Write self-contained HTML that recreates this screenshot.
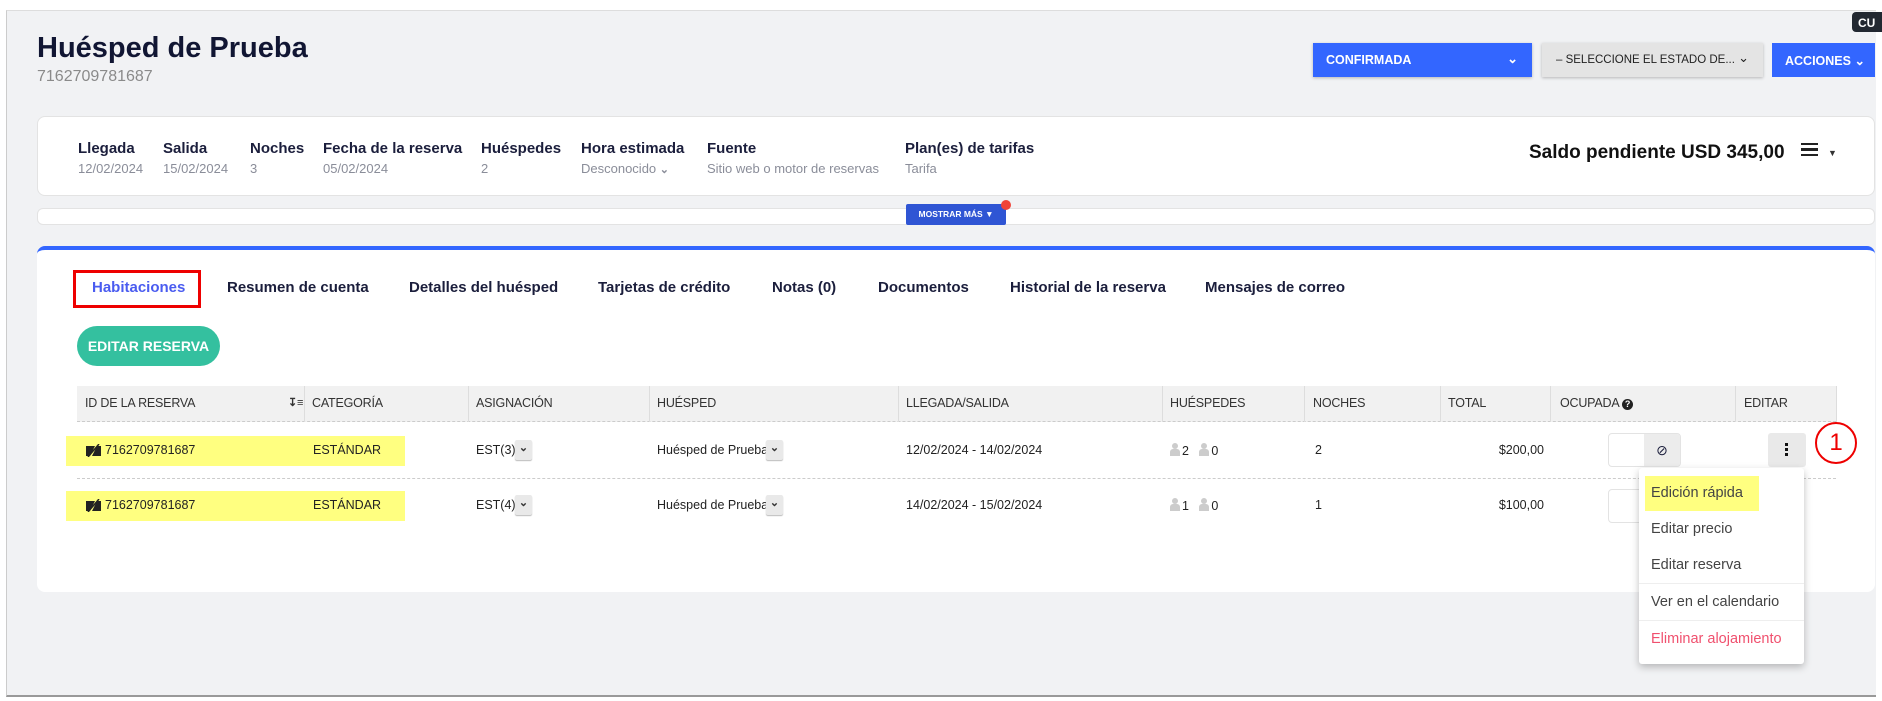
<!DOCTYPE html>
<html><head><meta charset="utf-8"><style>
*{box-sizing:border-box;margin:0;padding:0}
body{width:1882px;height:701px;overflow:hidden;background:#fff;font-family:"Liberation Sans",sans-serif;position:relative;color:#1b1e3c}
.a{position:absolute;white-space:nowrap}
.frame{left:6px;top:10px;width:1870px;height:687px;background:#f1f2f4;border-top:1px solid #ddd;border-left:1px solid #ccc;border-bottom:2px solid #999}
.card{background:#fff;border-radius:8px}
.lbl{font-size:15px;font-weight:bold;color:#1b1e3c;top:140px}
.val{font-size:13px;color:#8a8d99;top:161px}
.tab{font-size:15px;font-weight:bold;top:279px;color:#1b1e3c}
.th{font-size:12.5px;color:#333;top:396px;letter-spacing:-0.2px}
.sep{top:386px;width:1px;height:36px;background:#ddd}
.td{font-size:12.5px;color:#222}
.dd{width:17px;height:20px;background:#e9e9e9;border-radius:2px;box-shadow:0 1px 1px #bbb;font-size:11px;text-align:center;line-height:17px;color:#333;font-weight:bold}
.mi{font-size:14.5px;color:#444;left:1651px}
.pi{display:inline-block;vertical-align:-1px;margin-right:2px}
</style></head><body>
<div class="a frame"></div>
<div class="a" style="left:37px;top:32px;font-size:29px;font-weight:bold;color:#111633;letter-spacing:0px">Huésped de Prueba</div>
<div class="a" style="left:37px;top:68px;font-size:16px;color:#8a8a8a">7162709781687</div>

<div class="a" style="left:1313px;top:43px;width:219px;height:34px;background:#3366ff;box-shadow:0 1px 3px rgba(0,0,0,.25);color:#fff;font-size:12.5px;font-weight:bold;padding:10px 13px">CONFIRMADA<span style="position:absolute;right:14px;top:8px;font-size:13px">&#8964;</span></div>
<div class="a" style="left:1542px;top:43px;width:221px;height:34px;background:#e4e4e4;box-shadow:0 1px 3px rgba(0,0,0,.25);color:#222;font-size:11.5px;padding:11px 14px">– SELECCIONE EL ESTADO DE...<span style="position:absolute;right:14px;top:7px;font-size:13px">&#8964;</span></div>
<div class="a" style="left:1772px;top:43px;width:103px;height:34px;background:#3366ff;color:#fff;font-size:12.5px;font-weight:bold;padding:10px 13px">ACCIONES &#8964;</div>
<div class="a" style="left:1852px;top:12px;width:30px;height:20px;background:#222831;border-radius:4px 0 0 4px;color:#fff;font-size:12px;font-weight:bold;padding:4px 6px">CU</div>

<div class="a card" style="left:37px;top:116px;width:1838px;height:80px;border:1px solid #e3e3e3"></div>
<div class="a lbl" style="left:78px">Llegada</div><div class="a val" style="left:78px">12/02/2024</div>
<div class="a lbl" style="left:163px">Salida</div><div class="a val" style="left:163px">15/02/2024</div>
<div class="a lbl" style="left:250px">Noches</div><div class="a val" style="left:250px">3</div>
<div class="a lbl" style="left:323px">Fecha de la reserva</div><div class="a val" style="left:323px">05/02/2024</div>
<div class="a lbl" style="left:481px">Huéspedes</div><div class="a val" style="left:481px">2</div>
<div class="a lbl" style="left:581px">Hora estimada</div><div class="a val" style="left:581px">Desconocido <b style="font-size:11px">&#8964;</b></div>
<div class="a lbl" style="left:707px">Fuente</div><div class="a val" style="left:707px">Sitio web o motor de reservas</div>
<div class="a lbl" style="left:905px">Plan(es) de tarifas</div><div class="a val" style="left:905px">Tarifa</div>
<div class="a" style="left:1529px;top:142px;font-size:19px;font-weight:bold;color:#111">Saldo pendiente USD 345,00</div>
<div class="a" style="left:1801px;top:143px;width:17px;height:13px;border-top:2.5px solid #222;border-bottom:2.5px solid #222"><div style="margin-top:3px;height:2.5px;background:#222"></div></div>
<div class="a" style="left:1828px;top:148px;font-size:9px;color:#333">&#9660;</div>

<div class="a card" style="left:37px;top:208px;width:1838px;height:17px;border:1px solid #e3e3e3;border-radius:6px"></div>
<div class="a" style="left:906px;top:204px;width:100px;height:21px;background:#2f55d4;border-radius:2px;color:#fff;font-size:8.5px;font-weight:bold;text-align:center;line-height:21px">MOSTRAR MÁS &#9660;</div>
<div class="a" style="left:1001px;top:200px;width:10px;height:10px;border-radius:50%;background:#f04438"></div>

<div class="a card" style="left:37px;top:246px;width:1838px;height:346px;border-top:4px solid #3366ff"></div>
<div class="a" style="left:73px;top:270px;width:128px;height:38px;border:3px solid #ee0000"></div>
<div class="a tab" style="left:92px;color:#4a5cf0">Habitaciones</div>
<div class="a tab" style="left:227px">Resumen de cuenta</div>
<div class="a tab" style="left:409px">Detalles del huésped</div>
<div class="a tab" style="left:598px">Tarjetas de crédito</div>
<div class="a tab" style="left:772px">Notas (0)</div>
<div class="a tab" style="left:878px">Documentos</div>
<div class="a tab" style="left:1010px">Historial de la reserva</div>
<div class="a tab" style="left:1205px">Mensajes de correo</div>
<div class="a" style="left:77px;top:326px;width:143px;height:40px;background:#34c09f;border-radius:20px;color:#fff;font-size:14px;font-weight:bold;text-align:center;line-height:40px">EDITAR RESERVA</div>

<div class="a" style="left:77px;top:386px;width:1759px;height:36px;background:#f1f1f1;border-bottom:1px dashed #ccc"></div>
<div class="a sep" style="left:304px"></div><div class="a sep" style="left:468px"></div><div class="a sep" style="left:649px"></div><div class="a sep" style="left:898px"></div><div class="a sep" style="left:1162px"></div><div class="a sep" style="left:1304px"></div><div class="a sep" style="left:1440px"></div><div class="a sep" style="left:1550px"></div><div class="a sep" style="left:1735px"></div><div class="a sep" style="left:1836px"></div>
<div class="a th" style="left:85px">ID DE LA RESERVA</div>
<div class="a th" style="left:288px;font-size:11px;font-weight:bold">&#8615;&#8801;</div>
<div class="a th" style="left:312px">CATEGORÍA</div>
<div class="a th" style="left:476px">ASIGNACIÓN</div>
<div class="a th" style="left:657px">HUÉSPED</div>
<div class="a th" style="left:906px">LLEGADA/SALIDA</div>
<div class="a th" style="left:1170px">HUÉSPEDES</div>
<div class="a th" style="left:1313px">NOCHES</div>
<div class="a th" style="left:1448px">TOTAL</div>
<div class="a th" style="left:1560px">OCUPADA <span style="display:inline-block;width:11px;height:11px;border-radius:50%;background:#222;color:#fff;font-size:9px;text-align:center;line-height:11px;font-weight:bold">?</span></div>
<div class="a th" style="left:1744px">EDITAR</div>

<div class="a" style="left:77px;top:478px;width:1759px;border-top:1px dashed #ccc"></div>

<div class="a" style="left:66px;top:436px;width:339px;height:30px;background:#ffff80"></div>
<div class="a" style="left:66px;top:491px;width:339px;height:30px;background:#ffff80"></div>
<!-- row 1 -->
<svg class="a" style="left:86px;top:444px" width="15" height="13" viewBox="0 0 15 13"><path d="M0 2h9L4 12H0z M6 12l5-10h4v10z" fill="#222"/><path d="M2 13L13 0" stroke="#222" stroke-width="1.5"/></svg>
<div class="a td" style="left:105px;top:443px">7162709781687</div>
<div class="a td" style="left:313px;top:443px">ESTÁNDAR</div>
<div class="a td" style="left:476px;top:443px">EST(3)</div><div class="a dd" style="left:515px;top:440px">&#8964;</div>
<div class="a td" style="left:657px;top:443px">Huésped de Prueba</div><div class="a dd" style="left:766px;top:440px">&#8964;</div>
<div class="a td" style="left:906px;top:443px">12/02/2024 - 14/02/2024</div>
<div class="a td" style="left:1170px;top:443px"><svg class="pi" width="10" height="13" viewBox="0 0 10 13"><circle cx="5" cy="3" r="3" fill="#ccc"/><path d="M0 13v-4a3 3 0 0 1 3-3h4a3 3 0 0 1 3 3v4z" fill="#ccc"/></svg>2 &nbsp;&nbsp;<svg class="pi" width="10" height="13" viewBox="0 0 10 13"><circle cx="5" cy="3" r="3" fill="#ccc"/><path d="M0 13v-4a3 3 0 0 1 3-3h4a3 3 0 0 1 3 3v4z" fill="#ccc"/></svg>0</div>
<div class="a td" style="left:1315px;top:443px">2</div>
<div class="a td" style="left:1484px;top:443px;width:60px;text-align:right">$200,00</div>
<div class="a" style="left:1608px;top:433px;width:73px;height:34px;border:1px solid #e3e3e3;border-radius:4px;overflow:hidden"><div style="position:absolute;right:0;top:0;width:36px;height:34px;background:#ececec;text-align:center;line-height:32px;font-size:14px">&#8856;</div></div>
<div class="a" style="left:1768px;top:433px;width:38px;height:34px;background:#e9e9e9;border-radius:3px"><div style="position:absolute;left:17px;top:10px;width:3px;height:3px;background:#111;box-shadow:0 5px 0 #111,0 10px 0 #111"></div></div>
<div class="a" style="left:1815px;top:422px;width:42px;height:42px;border:2px solid #e00;border-radius:50%;color:#e00;font-size:24px;text-align:center;line-height:38px">1</div>
<!-- row 2 -->
<svg class="a" style="left:86px;top:499px" width="15" height="13" viewBox="0 0 15 13"><path d="M0 2h9L4 12H0z M6 12l5-10h4v10z" fill="#222"/><path d="M2 13L13 0" stroke="#222" stroke-width="1.5"/></svg>
<div class="a td" style="left:105px;top:498px">7162709781687</div>
<div class="a td" style="left:313px;top:498px">ESTÁNDAR</div>
<div class="a td" style="left:476px;top:498px">EST(4)</div><div class="a dd" style="left:515px;top:495px">&#8964;</div>
<div class="a td" style="left:657px;top:498px">Huésped de Prueba</div><div class="a dd" style="left:766px;top:495px">&#8964;</div>
<div class="a td" style="left:906px;top:498px">14/02/2024 - 15/02/2024</div>
<div class="a td" style="left:1170px;top:498px"><svg class="pi" width="10" height="13" viewBox="0 0 10 13"><circle cx="5" cy="3" r="3" fill="#ccc"/><path d="M0 13v-4a3 3 0 0 1 3-3h4a3 3 0 0 1 3 3v4z" fill="#ccc"/></svg>1 &nbsp;&nbsp;<svg class="pi" width="10" height="13" viewBox="0 0 10 13"><circle cx="5" cy="3" r="3" fill="#ccc"/><path d="M0 13v-4a3 3 0 0 1 3-3h4a3 3 0 0 1 3 3v4z" fill="#ccc"/></svg>0</div>
<div class="a td" style="left:1315px;top:498px">1</div>
<div class="a td" style="left:1484px;top:498px;width:60px;text-align:right">$100,00</div>
<div class="a" style="left:1608px;top:489px;width:73px;height:34px;border:1px solid #e3e3e3;border-radius:4px"></div>

<!-- menu -->
<div class="a" style="left:1639px;top:468px;width:165px;height:196px;background:#fff;border-radius:3px;box-shadow:0 3px 8px rgba(0,0,0,.25)"></div>
<div class="a" style="left:1645px;top:476px;width:114px;height:35px;background:#ffff80"></div>
<div class="a mi" style="top:485px">Edición rápida</div>
<div class="a mi" style="top:521px">Editar precio</div>
<div class="a mi" style="top:557px">Editar reserva</div>
<div class="a" style="left:1639px;top:583px;width:165px;border-top:1px solid #eee"></div>
<div class="a mi" style="top:594px">Ver en el calendario</div>
<div class="a" style="left:1639px;top:620px;width:165px;border-top:1px solid #eee"></div>
<div class="a mi" style="top:631px;color:#f0506e">Eliminar alojamiento</div>
</body></html>
